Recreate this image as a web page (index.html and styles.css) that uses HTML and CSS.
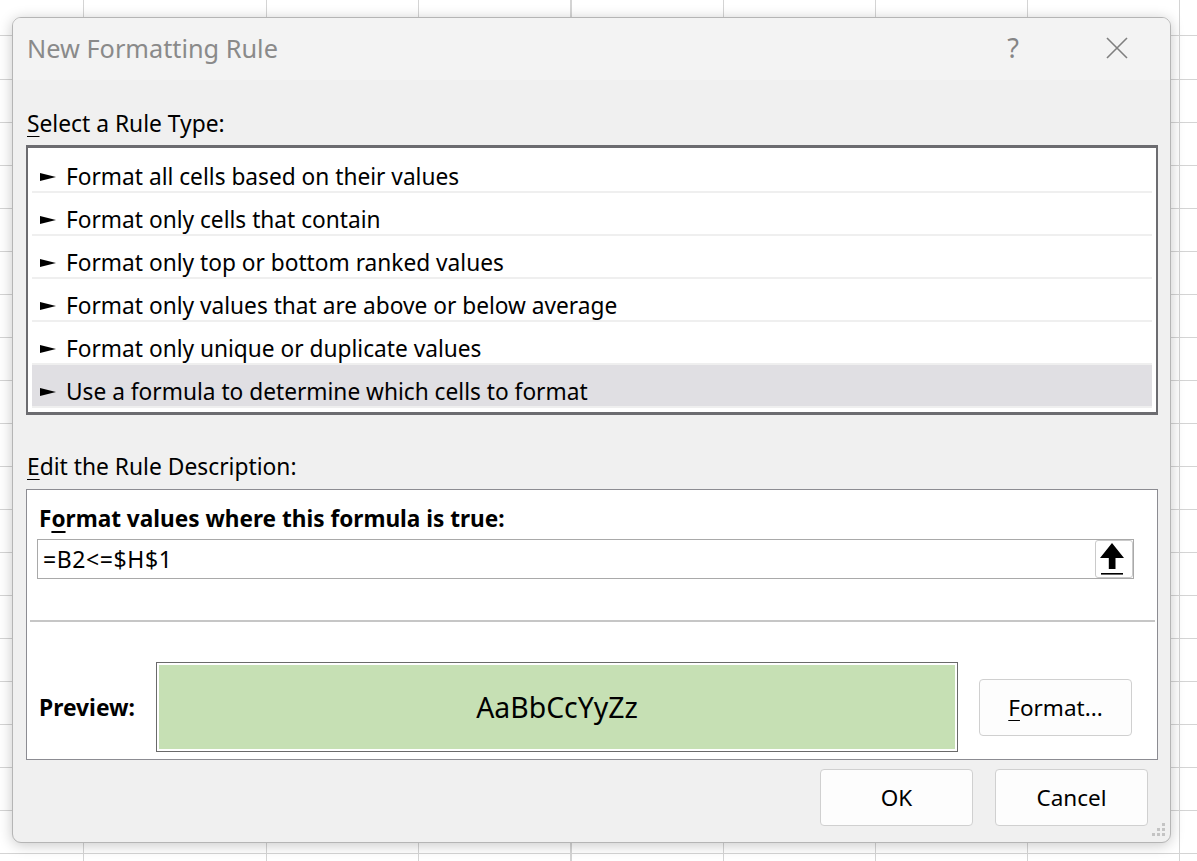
FILE: index.html
```html
<!DOCTYPE html>
<html>
<head>
<meta charset="utf-8">
<link rel="stylesheet" href="styles.css">
</head>
<body>
<div class="dialog">
  <div class="titlebar">
    <span class="title">New Formatting Rule</span>
    <span class="help">?</span>
    <span class="close"><svg width="22" height="22" viewBox="0 0 22 22"><path d="M1 1L21 21M21 1L1 21" stroke="#7f7f7f" stroke-width="1.6" fill="none"/></svg></span>
  </div>
  <div class="content">
    <div class="label lbl-select"><u>S</u>elect a Rule Type:</div>
    <div class="listbox">
      <div class="row"><svg class="tri" width="16" height="8" viewBox="0 0 16 8"><polygon points="0,0 16,4 0,8" fill="#000"/></svg><span>Format all cells based on their values</span></div>
      <div class="row"><svg class="tri" width="16" height="8" viewBox="0 0 16 8"><polygon points="0,0 16,4 0,8" fill="#000"/></svg><span>Format only cells that contain</span></div>
      <div class="row"><svg class="tri" width="16" height="8" viewBox="0 0 16 8"><polygon points="0,0 16,4 0,8" fill="#000"/></svg><span>Format only top or bottom ranked values</span></div>
      <div class="row"><svg class="tri" width="16" height="8" viewBox="0 0 16 8"><polygon points="0,0 16,4 0,8" fill="#000"/></svg><span>Format only values that are above or below average</span></div>
      <div class="row"><svg class="tri" width="16" height="8" viewBox="0 0 16 8"><polygon points="0,0 16,4 0,8" fill="#000"/></svg><span>Format only unique or duplicate values</span></div>
      <div class="row selected"><svg class="tri" width="16" height="8" viewBox="0 0 16 8"><polygon points="0,0 16,4 0,8" fill="#000"/></svg><span>Use a formula to determine which cells to format</span></div>
    </div>
    <div class="label lbl-edit"><u>E</u>dit the Rule Description:</div>
    <div class="panel">
      <div class="heading">F<u>o</u>rmat values where this formula is true:</div>
      <div class="formula">
        <span class="formula-text">=B2&lt;=$H$1</span>
        <span class="refbtn"><svg width="36" height="36" viewBox="0 0 36 36"><path d="M16 2L4 17H12.8V28H19.5V17H28Z" fill="#000"/><rect x="5" y="32" width="22" height="1.6" fill="#000"/></svg></span>
      </div>
      <div class="sep"></div>
      <div class="preview-row">
        <span class="preview-label">Preview:</span>
        <div class="preview"><div class="sample">AaBbCcYyZz</div></div>
        <span class="btn btn-format"><u>F</u>ormat...</span>
      </div>
    </div>
    <div class="footer">
      <span class="btn">OK</span>
      <span class="btn">Cancel</span>
    </div>
  </div>
  <svg class="grip" width="18" height="18" viewBox="0 0 18 18">
    <rect x="13" y="1" width="3" height="3" fill="#c4c4c4"/>
    <rect x="8" y="6" width="3" height="3" fill="#c4c4c4"/>
    <rect x="13" y="6" width="3" height="3" fill="#c4c4c4"/>
    <rect x="3" y="11" width="3" height="3" fill="#c4c4c4"/>
    <rect x="8" y="11" width="3" height="3" fill="#c4c4c4"/>
    <rect x="13" y="11" width="3" height="3" fill="#c4c4c4"/>
  </svg>
</div>
</body>
</html>
```
FILE: styles.css
```css
html, body {
  margin: 0;
  padding: 0;
}
body {
  width: 1197px;
  height: 861px;
  overflow: hidden;
  font-family: "Noto Sans", "Open Sans", sans-serif;
  color: #000;
  background-color: #ffffff;
  background-image:
    linear-gradient(to right, transparent 83px, #d4d4d4 83px, #d4d4d4 84px, transparent 84px),
    repeating-linear-gradient(to right, transparent 0, transparent 151px, #d4d4d4 151px, #d4d4d4 152.2px),
    repeating-linear-gradient(to bottom, transparent 0, transparent 42px, #d4d4d4 42px, #d4d4d4 43px);
  background-position: 0 0, 115px 0, 0 37px;
  padding-top: 17px;
  padding-left: 12px;
  box-sizing: border-box;
}
.dialog {
  position: relative;
  width: 1159px;
  box-sizing: border-box;
  border: 1px solid #b5b5b5;
  border-radius: 9px;
  background: #f0f0f0;
  box-shadow: 0 2px 14px rgba(0,0,0,0.22);
  overflow: hidden;
}
.titlebar {
  height: 62px;
  background: #f3f3f3;
  display: flex;
  align-items: center;
  padding-left: 14px;
}
.title {
  font-size: 25.3px;
  color: #8a8a8a;
  flex: 1;
  padding-bottom: 2px;
}
.help {
  font-size: 27px;
  color: #858585;
  width: 30px;
  text-align: center;
  margin-right: 78px;
  padding-bottom: 3px;
}
.close {
  display: flex;
  margin-right: 42px;
  padding-bottom: 3px;
}
.content {
  padding: 0 12px 16px 13px;
}
.label {
  font-size: 22.8px;
  line-height: 28px;
  padding-left: 1px;
}
.label u {
  text-decoration-thickness: 1px;
  text-underline-offset: 4px;
}
.lbl-select {
  margin-top: 30px;
}
.listbox {
  margin-top: 7px;
  border: 2px solid #6c6c70;
  border-top-width: 3px;
  border-bottom-width: 3px;
  background: #fff;
  padding: 2px 4px 4px 4px;
}
.row {
  height: 41px;
  border-bottom: 2px solid #efefef;
  display: flex;
  align-items: center;
  padding-left: 8px;
  font-size: 22.7px;
  line-height: 28px;
}
.row span,
.row .tri {
  position: relative;
  top: 6px;
}
.row.selected {
  background: #e0dfe3;
}
.tri {
  margin-right: 10px;
  flex: none;
}
.lbl-edit {
  margin-top: 38px;
}
.panel {
  margin-top: 8px;
  border: 1px solid #8c8c92;
  background: #fff;
  padding: 15px 0 7px 0;
}
.heading {
  font-size: 22.6px;
  font-weight: bold;
  line-height: 28px;
  padding-left: 12px;
}
.heading u {
  text-decoration-thickness: 1.5px;
  text-underline-offset: 4px;
}
.formula {
  margin: 6px 23px 0 10px;
  height: 40px;
  box-sizing: border-box;
  border: 1px solid #a9a9a9;
  display: flex;
  align-items: center;
  justify-content: space-between;
}
.formula-text {
  font-size: 23px;
  padding-left: 5px;
  letter-spacing: 0.6px;
}
.refbtn {
  width: 38px;
  height: 38px;
  box-sizing: border-box;
  border: 1px solid #cacaca;
  border-radius: 3px;
  display: flex;
  align-items: center;
  justify-content: center;
  background: #fff;
}
.sep {
  margin: 41px 2px 0 3px;
  height: 2px;
  background: #c6c6c6;
}
.preview-row {
  margin-top: 40px;
  display: flex;
  align-items: center;
}
.preview-label {
  font-size: 22.8px;
  font-weight: bold;
  width: 117px;
  padding-left: 12px;
  box-sizing: content-box;
}
.preview {
  width: 802px;
  height: 90px;
  box-sizing: border-box;
  border: 1px solid #6a6a6a;
  padding: 2px;
  background: #fff;
}
.sample {
  height: 100%;
  background: #c6e0b4;
  display: flex;
  align-items: center;
  justify-content: center;
  font-size: 28.4px;
}
.btn {
  width: 153px;
  height: 57px;
  box-sizing: border-box;
  border: 1px solid #d0d0d0;
  border-radius: 4px;
  background: #fdfdfd;
  display: flex;
  align-items: center;
  justify-content: center;
  font-size: 22.5px;
}
.btn u {
  text-decoration-thickness: 1px;
  text-underline-offset: 4px;
}
.btn-format {
  margin-left: 21px;
}
.footer {
  margin-top: 9px;
  display: flex;
  justify-content: flex-end;
  gap: 22px;
  padding-right: 10px;
}
.grip {
  position: absolute;
  right: 3px;
  bottom: 2px;
}
```
